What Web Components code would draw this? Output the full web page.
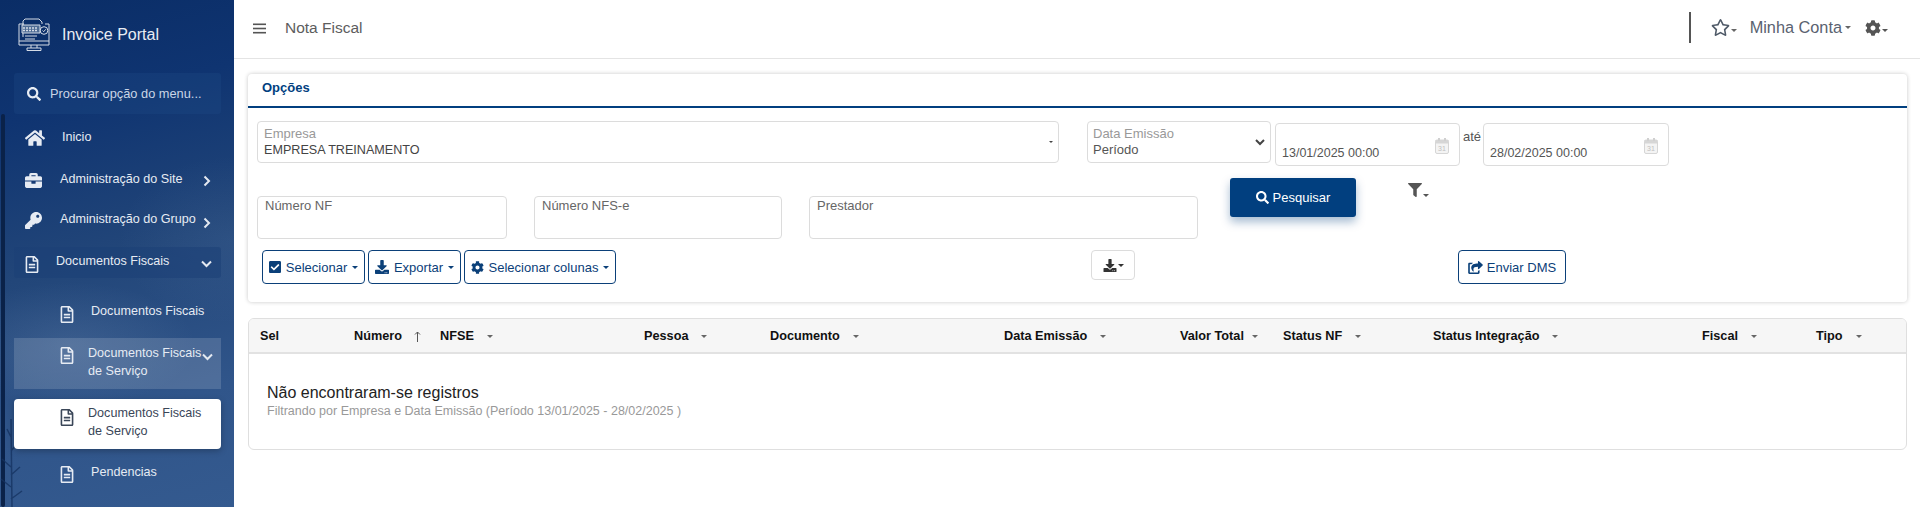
<!DOCTYPE html>
<html lang="pt-BR"><head><meta charset="utf-8"><title>Nota Fiscal</title>
<style>
html,body{margin:0;height:507px;overflow:hidden;background:#fff;font-family:"Liberation Sans",Arial,sans-serif;font-size:13px;color:#555}
</style></head><body>
<app-shell></app-shell>
<script>
const P={
search:['0 0 512 512','M505 442.7L405.3 343c-4.5-4.5-10.6-7-17-7H372c27.6-35.3 44-79.7 44-128C416 93.1 322.9 0 208 0S0 93.1 0 208s93.1 208 208 208c48.3 0 92.7-16.4 128-44v16.3c0 6.4 2.5 12.5 7 17l99.7 99.7c9.4 9.4 24.6 9.4 33.9 0l28.3-28.3c9.4-9.4 9.4-24.6.1-34zM208 336c-70.7 0-128-57.2-128-128 0-70.7 57.2-128 128-128 70.7 0 128 57.2 128 128 0 70.7-57.2 128-128 128z'],
home:['0 0 576 512','M280.37 148.26L96 300.11V464a16 16 0 0 0 16 16l112.06-.29a16 16 0 0 0 15.92-16V368a16 16 0 0 1 16-16h64a16 16 0 0 1 16 16v95.64a16 16 0 0 0 16 16.05L464 480a16 16 0 0 0 16-16V300L295.67 148.26a12.19 12.19 0 0 0-15.3 0zM571.6 251.47L488 182.56V44.05a12 12 0 0 0-12-12h-56a12 12 0 0 0-12 12v72.61L318.47 43a48 48 0 0 0-61 0L4.34 251.47a12 12 0 0 0-1.6 16.9l25.5 31A12 12 0 0 0 45.15 301l235.22-193.74a12.19 12.19 0 0 1 15.3 0L530.9 301a12 12 0 0 0 16.9-1.6l25.5-31a12 12 0 0 0-1.7-16.93z'],
briefcase:['0 0 512 512','M320 336c0 8.84-7.16 16-16 16h-96c-8.84 0-16-7.16-16-16v-48H0v144c0 25.6 22.4 48 48 48h416c25.6 0 48-22.4 48-48V288H320v48zm144-208h-80V80c0-25.6-22.4-48-48-48H176c-25.6 0-48 22.4-48 48v48H48c-25.6 0-48 22.4-48 48v80h512v-80c0-25.6-22.4-48-48-48zm-144 0H192V96h128v32z'],
key:['0 0 512 512','M512 176.001C512 273.203 433.202 352 336 352c-11.22 0-22.19-1.062-32.827-3.069l-24.012 27.014A23.999 23.999 0 0 1 261.223 384H224v40c0 13.255-10.745 24-24 24h-40v40c0 13.255-10.745 24-24 24H24c-13.255 0-24-10.745-24-24v-78.059c0-6.365 2.529-12.47 7.029-16.971l161.802-161.802C163.108 213.814 160 195.271 160 176 160 78.798 238.797.001 335.999 0 433.488-.001 512 78.511 512 176.001zM336 128c0 26.51 21.49 48 48 48s48-21.49 48-48-21.49-48-48-48-48 21.49-48 48z'],
file:['0 0 384 512','M288 248v28c0 6.6-5.4 12-12 12H108c-6.6 0-12-5.4-12-12v-28c0-6.6 5.4-12 12-12h168c6.6 0 12 5.4 12 12zm-12 72H108c-6.6 0-12 5.4-12 12v28c0 6.6 5.4 12 12 12h168c6.6 0 12-5.4 12-12v-28c0-6.6-5.4-12-12-12zm108-188.1V464c0 26.5-21.5 48-48 48H48c-26.5 0-48-21.5-48-48V48C0 21.5 21.5 0 48 0h204.1C264.8 0 277 5.1 286 14.1L369.9 98c9 8.9 14.1 21.2 14.1 33.9zm-128-80V128h76.1L256 51.9zM336 464V176H232c-13.3 0-24-10.7-24-24V48H48v416h288z'],
star:['0 0 576 512','M528.1 171.5L382 150.2 316.7 17.8c-11.7-23.6-45.6-23.9-57.4 0L194 150.2 47.9 171.5c-26.2 3.8-36.7 36.1-17.7 54.6l105.7 103-25 145.5c-4.5 26.3 23.2 46 46.4 33.7L288 439.6l130.7 68.7c23.2 12.2 50.9-7.4 46.4-33.7l-25-145.5 105.7-103c19-18.5 8.5-50.8-17.7-54.6zM388.6 312.3l23.7 138.4L288 385.4l-124.3 65.3 23.7-138.4-100.6-98 139-20.2 62.2-126 62.2 126 139 20.2-100.6 98z'],
cog:['0 0 512 512','M487.4 315.7l-42.6-24.6c4.3-23.2 4.3-47 0-70.2l42.6-24.6c4.9-2.8 7.1-8.6 5.5-14-11.1-35.6-30-67.8-54.7-94.6-3.8-4.1-10-5.1-14.8-2.3L380.8 110c-17.9-15.4-38.5-27.3-60.8-35.1V25.8c0-5.6-3.9-10.5-9.4-11.7-36.7-8.2-74.3-7.8-109.2 0-5.5 1.2-9.4 6.1-9.4 11.7V75c-22.2 7.9-42.8 19.8-60.8 35.1L88.7 85.5c-4.9-2.8-11-1.9-14.8 2.3-24.7 26.7-43.6 58.9-54.7 94.6-1.7 5.4.6 11.2 5.5 14L67.3 221c-4.3 23.2-4.3 47 0 70.2l-42.6 24.6c-4.9 2.8-7.1 8.6-5.5 14 11.1 35.6 30 67.8 54.7 94.6 3.8 4.1 10 5.1 14.8 2.3l42.6-24.6c17.9 15.4 38.5 27.3 60.8 35.1v49.2c0 5.6 3.9 10.5 9.4 11.7 36.7 8.2 74.3 7.8 109.2 0 5.5-1.2 9.4-6.1 9.4-11.7v-49.2c22.2-7.9 42.8-19.8 60.8-35.1l42.6 24.6c4.9 2.8 11 1.9 14.8-2.3 24.7-26.7 43.6-58.9 54.7-94.6 1.5-5.5-.7-11.3-5.6-14.1zM256 336c-44.1 0-80-35.9-80-80s35.9-80 80-80 80 35.9 80 80-35.9 80-80 80z'],
check:['0 0 448 512','M400 480H48c-26.51 0-48-21.49-48-48V80c0-26.51 21.49-48 48-48h352c26.51 0 48 21.49 48 48v352c0 26.51-21.49 48-48 48zm-204.686-98.059l184-184c6.248-6.248 6.248-16.379 0-22.627l-22.627-22.627c-6.248-6.248-16.379-6.249-22.628 0L184 302.745l-70.059-70.059c-6.248-6.248-16.379-6.248-22.628 0l-22.627 22.627c-6.248 6.248-6.248 16.379 0 22.627l104 104c6.249 6.25 16.379 6.25 22.628.001z'],
download:['0 0 512 512','M216 0h80c13.3 0 24 10.7 24 24v168h87.7c17.8 0 26.7 21.5 14.1 34.1L269.7 378.3c-7.5 7.5-19.8 7.5-27.3 0L90.1 226.1c-12.6-12.6-3.7-34.1 14.1-34.1H192V24c0-13.3 10.7-24 24-24zm296 376v112c0 13.3-10.7 24-24 24H24c-13.3 0-24-10.7-24-24V376c0-13.3 10.7-24 24-24h146.7l49 49c20.1 20.1 52.5 20.1 72.6 0l49-49H488c13.3 0 24 10.7 24 24zm-124 88c0-11-9-20-20-20s-20 9-20 20 9 20 20 20 20-9 20-20zm64 0c0-11-9-20-20-20s-20 9-20 20 9 20 20 20 20-9 20-20z'],
filter:['0 0 512 512','M487.976 0H24.028C2.71 0-8.047 25.866 7.058 40.971L192 225.941V432c0 7.831 3.821 15.17 10.237 19.662l80 55.98C298.02 518.69 320 507.493 320 487.98V225.941l184.947-184.97C520.021 25.896 509.338 0 487.976 0z'],
share:['0 0 576 512','M568.482 177.448L424.479 313.433C409.3 327.768 384 317.14 384 295.985v-71.963c-144.575.97-205.566 35.113-164.775 171.353 4.483 14.973-12.846 26.567-25.006 17.33C155.252 383.105 120 326.488 120 269.339c0-143.937 117.599-172.5 264-173.312V24.012c0-21.174 25.317-31.768 40.479-17.448l144.003 135.988c10.02 9.463 10.028 25.425 0 34.896zM384 379.128V448H64V128h50.916c3.3 0 6.4-1.3 8.648-3.693 14.953-15.568 32.237-27.89 51.014-37.676C186.708 80.326 182.225 64 168.775 64H48C21.49 64 0 85.49 0 112v352c0 26.51 21.49 48 48 48h352c26.51 0 48-21.49 48-48v-88.806c0-8.3-8.2-14-16-11.2-7 2.5-13 5.5-20 7.5-5 1.5-12 6.5-12 16.6z']
};
const ic=(n,w,h,c='currentColor')=>`<svg viewBox="${P[n][0]}" width="${w}" height="${h}" fill="${c}" style="display:block;flex:none"><path d="${P[n][1]}"/></svg>`;
const caret=(c='#555',s=3)=>`<span style="display:inline-block;flex:none;width:0;height:0;border:${s}px solid transparent;border-top:${s}px solid ${c};border-bottom:0"></span>`;
const chev=(d)=>d==='r'?`<svg width="8" height="12" viewBox="0 0 8 12" style="display:block"><path d="M1.500 1.500 6 6l-4.500 4.500" fill="none" stroke="#e4e9f1" stroke-width="2"/></svg>`:`<svg width="11" height="8" viewBox="0 0 11 8" style="display:block"><path d="M1 1.500 5.500 6 10 1.500" fill="none" stroke="#e4e9f1" stroke-width="2"/></svg>`;
const base=(name,css,html)=>customElements.define(name,class extends HTMLElement{
  connectedCallback(){if(this.shadowRoot)return;const r=this.attachShadow({mode:'open'});r.innerHTML=`<style>${css}</style>`+(typeof html==='function'?html(this):html);}
});

base('nav-item',`
:host{display:block;color:#e6ebf3;font-size:12.600px;line-height:18px}
.row{display:flex;box-sizing:border-box;align-items:center;margin:0 13px 0 14px;position:relative}
.ico{position:absolute;top:50%;display:block}
.lab{flex:1}
.ch{position:absolute}
:host([kind=open]) .row{background:rgba(27,64,118,.55);border-radius:3px}
:host([kind=hover]) .row{background:rgba(255,255,255,.15)}
:host([kind=active]) .row{background:#fff;color:#3a4658;border-radius:4px;box-shadow:0 2px 6px rgba(0,0,0,.25)}
`,h=>{const g=n=>h.getAttribute(n);
 return `<div class="row" style="height:${g('h')}px;padding-left:${g('tx')-14}px;">
 <span class="ico" style="left:${g('ix')-14}px;margin-top:${g('iy')||-8}px">${ic(g('icon'),g('iw'),g('ih')||g('iw'))}</span>
 <span class="lab" style="position:relative;top:${g('ty')||0}px">${g('label').split('|').join('<br>')}</span>
 ${g('chev')?`<span class="ch" style="left:${g('cx')-14}px;top:${g('cy')}px">${chev(g('chev'))}</span>`:''}
 </div>`});

base('side-bar',`
:host{display:flex;flex-direction:column;flex:none;width:234px;height:507px;box-sizing:border-box;position:relative;overflow:hidden;color:#e6ebf3;
background:
 radial-gradient(ellipse 180px 90px at 70px 345px,rgba(150,175,205,.16),transparent 70%),
 radial-gradient(ellipse 160px 120px at 230px 240px,rgba(130,160,200,.10),transparent 70%),
 linear-gradient(165deg,#0a2d66 0%,#0f3471 22%,#224679 50%,#30558a 78%,#345a8f 100%)}
.brand{display:flex;align-items:center;height:73px;box-sizing:border-box;padding:0 0 4px 18px;font-size:16px;gap:12px;color:#e8ecf3}
.find{display:flex;align-items:center;height:41px;margin:0 13px 0 14px;border-radius:3px;background:rgba(30,75,135,.32);padding-left:13px;gap:9px;font-size:12.800px;color:#c9d5e6}
.find svg{color:#e8edf4}
.bar{position:absolute;left:1px;top:114px;bottom:0;width:4px;border-radius:3px;background:#0a2249}
.plant{position:absolute;left:0;bottom:0}
`,`<span class="bar"></span>
<svg class="plant" width="26" height="90" viewBox="0 0 26 90" fill="none" stroke="#14315f" stroke-width="1.500"><path d="M12 90 11 2M11 20l-4-8M11 34l5-6M11 50 2 42M11 58 20 50M11 70 1 62M11 82 22 74" opacity=".75"/></svg>
<div class="brand">
<svg width="32" height="33" viewBox="0 0 32 33" fill="none" stroke="#d5dce6" stroke-width="1"><path d="M6 6H1v21h30V6h-4M1 23h30M13 27v3M19 27v3M9 32.500h14v-2.500H9z"/><path d="M5 19V3l2-2h14l3 3v2"/><path d="M4 7h18v8H4z" fill="#4f6c94"/><path d="M5 10h15M5 12.500h15" stroke-width="1.500" stroke-dasharray="2 1"/><circle cx="26" cy="12.500" r="3.800"/><path d="M24.500 12.500l1.200 1.200 2-2.400M7 18h12M7 21h10"/></svg>
<span>Invoice Portal</span></div>
<div class="find">${ic('search',14,14)}<span>Procurar opção do menu...</span></div>
<div>
<nav-item style="margin-top:3px" h="42" tx="62" ix="25" iw="20" ih="18" iy="-9" ty="-1" icon="home" label="Inicio"></nav-item>
<nav-item h="39" tx="60" ix="25" iw="17" iy="-7" ty="0" icon="briefcase" label="Administração do Site" chev="r" cx="203" cy="16"></nav-item>
<nav-item style="margin-top:1px" h="39" tx="60" ix="25" iw="17" iy="-7" ty="0" icon="key" label="Administração do Grupo" chev="r" cx="203" cy="18"></nav-item>
<nav-item style="margin-top:9px" kind="open" h="31" tx="56" ix="25" iw="14" ih="17" iy="-7" ty="-1.500" icon="file" label="Documentos Fiscais" chev="d" cx="201" cy="13"></nav-item>
</div>
<div>
<nav-item h="60" tx="91" ix="60" iw="14" ih="17" iy="-2.500" ty="3" icon="file" label="Documentos Fiscais"></nav-item>
<nav-item kind="hover" h="51" tx="88" ix="60" iw="14" ih="17" iy="-17" ty="-1.500" icon="file" label="Documentos Fiscais|de Serviço" chev="d" cx="202" cy="15"></nav-item>
<nav-item style="margin-top:10px" kind="active" h="50" tx="88" ix="60" iw="14" ih="17" iy="-15.500" ty="-2" icon="file" label="Documentos Fiscais|de Serviço"></nav-item>
<nav-item h="46" tx="91" ix="60" iw="14" ih="17" iy="-6.500" ty="0" icon="file" label="Pendencias"></nav-item>
</div>`);

base('top-bar',`
:host{display:flex;align-items:center;height:59px;box-sizing:border-box;padding:0 32px 3px 19px;border-bottom:1px solid #e4e4e4;background:#fff;color:#555}
.t{font-size:15.500px;margin-left:19px;flex:1;color:#5d5d5d}
.sep{width:2px;height:31px;background:#555;margin:0 20px 0 0}
.acc{font-size:16.300px;color:#5a6270;margin:0 3px 0 13px}
.m{display:flex;align-items:center}
`,`<svg width="13" height="11" viewBox="0 0 13 11" fill="#555" style="margin-top:2px"><rect width="13" height="1.600" y="0.500"/><rect width="13" height="1.600" y="4.700"/><rect width="13" height="1.600" y="8.900"/></svg>
<span class="t">Nota Fiscal</span><span class="sep"></span>
<span class="m">${ic('star',19,17,'#4f5a68')}<span style="margin-left:1px">${caret('#666')}</span></span>
<span class="acc">Minha Conta</span>${caret('#666')}
<span class="m" style="margin-left:14px">${ic('cog',16,16,'#555')}<span style="margin-left:1px">${caret('#555')}</span></span>`);

base('text-field',`
:host{display:block;box-sizing:border-box;border:1px solid #dcdcdc;border-radius:4px;height:43px;padding:1px 7px;font-size:13px;line-height:16px;color:#666;background:#fff}
`,`<slot></slot>`);

base('date-field',`
:host{display:flex;box-sizing:border-box;border:1px solid #dcdcdc;border-radius:4px;height:43px;padding:0 6px;font-size:12.500px;color:#555;align-items:flex-end;justify-content:space-between;background:#fff}
span{margin-bottom:5px}
svg{margin:0 4px 11px 0}
`,h=>`<span>${h.getAttribute('value')}</span><svg width="14" height="16" viewBox="0 0 14 16"><rect x=".5" y="2" width="13" height="13.500" rx="1.500" fill="#f4f4f4" stroke="#d6d6d6"/><rect x=".5" y="2" width="13" height="3.500" fill="#d6d6d6"/><rect x="3" y="0" width="2" height="3" fill="#d0d0d0"/><rect x="9" y="0" width="2" height="3" fill="#d0d0d0"/><text x="7" y="13" font-size="7" fill="#c0c0c0" text-anchor="middle" font-family="Liberation Sans">31</text></svg>`);

base('out-btn',`
:host{display:inline-flex;align-items:center;justify-content:center;box-sizing:border-box;height:34px;border:1px solid #0b4079;border-radius:4px;font-size:13px;color:#0b4079;gap:5px;background:#fff}
`,`<slot></slot>`);

base('primary-btn',`
:host{display:flex;align-items:center;justify-content:center;box-sizing:border-box;width:126px;height:39px;border-radius:3px;background:#013f7f;color:#fff;font-size:13px;gap:4px;box-shadow:0 5px 10px rgba(1,63,127,.35)}
`,`${ic('search',13,13,'#fff')}<slot></slot>`);

base('options-panel',`
:host{display:block;height:228px;box-sizing:border-box;border-radius:4px;background:#fff;box-shadow:0 0 4px rgba(0,0,0,.22)}
.head{height:34px;box-sizing:border-box;border-bottom:2px solid #013f7f;padding:6px 14px 0;font-weight:bold;font-size:13px;line-height:16px;color:#013f7f}
.r1{display:flex;padding:13px 0 0 9px;height:57px;box-sizing:content-box}
.r2{display:flex;padding:0 0 0 9px;height:61px}
.r3{display:flex;padding:11px 0 0 14px;align-items:flex-start}
.l{color:#999;display:block;font-size:13px}
.sel{display:flex;justify-content:space-between;align-items:center;box-sizing:border-box;border:1px solid #dcdcdc;border-radius:4px;height:42px;padding:1px 5px 1px 6px;line-height:16px;font-size:12.600px;color:#555}
.ate{width:23px;box-sizing:border-box;padding:8px 0 0 3px;font-size:13px;color:#555}
.dl{display:flex;align-items:center;justify-content:center;gap:1px;box-sizing:border-box;width:44px;height:30px;border:1px solid #dcdcdc;border-radius:4px;color:#333}
`,`<div class="head">Opções</div>
<div class="r1">
<div class="sel" style="width:802px;color:#444"><div><span class="l">Empresa</span>EMPRESA TREINAMENTO</div>${caret('#444',2)}</div>
<div class="sel" style="width:184px;margin-left:28px;padding-left:5px;font-size:13px"><div><span class="l">Data Emissão</span>Período</div><svg width="10" height="7" viewBox="0 0 10 7"><path d="M1 1l4 4 4-4" fill="none" stroke="#444" stroke-width="2"/></svg></div>
<date-field style="width:185px;margin:1.500px 0 0 4px" value="13/01/2025 00:00"></date-field>
<div class="ate">até</div>
<date-field style="width:186px;margin-top:1.500px" value="28/02/2025 00:00"></date-field>
</div>
<div class="r2">
<text-field style="width:250px;margin-top:18px">Número NF</text-field>
<text-field style="width:248px;margin:18px 0 0 27px">Número NFS-e</text-field>
<text-field style="width:389px;margin:18px 0 0 27px">Prestador</text-field>
<primary-btn style="margin-left:32px">Pesquisar</primary-btn>
<span style="display:flex;align-items:flex-end;gap:1px;margin:6px 0 0 52px;height:13px;color:#555">${ic('filter',14,14,'#555')}${caret('#555')}</span>
</div>
<div class="r3">
<out-btn style="width:103px">${ic('check',12,14,'#0b4079')}<span>Selecionar</span>${caret('#0b4079')}</out-btn>
<out-btn style="width:93px;margin-left:3px">${ic('download',14,14,'#0b4079')}<span>Exportar</span>${caret('#0b4079')}</out-btn>
<out-btn style="width:152px;margin-left:3px">${ic('cog',13,13,'#0b4079')}<span>Selecionar colunas</span>${caret('#0b4079')}</out-btn>
<div class="dl" style="margin-left:475px">${ic('download',14,13,'#333')}${caret('#333')}</div>
<out-btn style="width:108px;margin-left:323px;gap:4px">${ic('share',15,13,'#0b4079')}<span>Enviar DMS</span></out-btn>
</div>`);

base('sort-head',`
:host{display:flex;align-items:center;font-weight:bold;font-size:12.700px;color:#111;padding-left:11px;white-space:nowrap}
`,h=>{const g=h.getAttribute('gap');const s=h.getAttribute('sort');
return `<slot></slot>${s==='up'?`<svg width="7" height="11" viewBox="0 0 7 11" style="margin:2px 0 0 12px"><path d="M3.500 11V1M1 3.500 3.500 1 6 3.500" fill="none" stroke="#555" stroke-width="1"/></svg>`:s==='none'?'':`<span style="margin:2px 0 0 ${g||13}px;display:flex">${caret('#666',3.5)}</span>`}`});

base('data-table',`
:host{display:block;height:132px;box-sizing:border-box;border:1px solid #dfdfdf;border-radius:6px;background:#fff;margin-top:16px;overflow:hidden}
.h{display:grid;grid-template-columns:94px 86px 204px 126px 234px 176px 103px 150px 269px 114px 102px;height:35px;background:#f6f6f6;border-bottom:2px solid #e2e2e2;box-sizing:border-box}
.e{padding:29px 0 0 18px}
.a{font-size:16px;line-height:19px;color:#222}
.b{font-size:12.500px;line-height:16px;color:#999;margin-top:1px}
`,`<div class="h">
<sort-head sort="none">Sel</sort-head><sort-head sort="up">Número</sort-head><sort-head>NFSE</sort-head><sort-head>Pessoa</sort-head><sort-head>Documento</sort-head><sort-head>Data Emissão</sort-head><sort-head gap="8">Valor Total</sort-head><sort-head>Status NF</sort-head><sort-head>Status Integração</sort-head><sort-head>Fiscal</sort-head><sort-head>Tipo</sort-head>
</div><div class="e"><div class="a">Não encontraram-se registros</div><div class="b">Filtrando por Empresa e Data Emissão (Período 13/01/2025 - 28/02/2025 )</div></div>`);

base('app-shell',`
:host{display:flex;width:1920px;height:507px;overflow:hidden}
main{flex:1;display:block;min-width:0}
.c{padding:15px 13px 0 14px}
`,`<side-bar></side-bar><main><top-bar></top-bar><div class="c"><options-panel></options-panel><data-table></data-table></div></main>`);
</script></body></html>
